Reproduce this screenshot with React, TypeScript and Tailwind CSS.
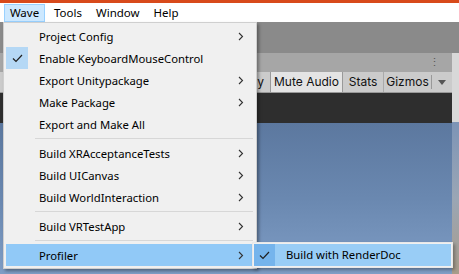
import React from 'react';

type Item =
  | { kind: 'item'; label: string; sub?: boolean; checked?: boolean; active?: boolean }
  | { kind: 'sep' };

const items: Item[] = [
  { kind: 'item', label: 'Project Config', sub: true },
  { kind: 'item', label: 'Enable KeyboardMouseControl', checked: true },
  { kind: 'item', label: 'Export Unitypackage', sub: true },
  { kind: 'item', label: 'Make Package', sub: true },
  { kind: 'item', label: 'Export and Make All' },
  { kind: 'sep' },
  { kind: 'item', label: 'Build XRAcceptanceTests', sub: true },
  { kind: 'item', label: 'Build UICanvas', sub: true },
  { kind: 'item', label: 'Build WorldInteraction', sub: true },
  { kind: 'sep' },
  { kind: 'item', label: 'Build VRTestApp', sub: true },
  { kind: 'sep' },
  { kind: 'item', label: 'Profiler', sub: true, active: true },
];

const Chevron = () => (
  <svg width="6" height="9" viewBox="0 0 6 9" className="text-[#333]">
    <path d="M1 1 L4.5 4.5 L1 8" fill="none" stroke="currentColor" strokeWidth="1.1" />
  </svg>
);

const Check = () => (
  <svg width="11" height="9" viewBox="0 0 11 9" className="text-[#1f1f1f]">
    <path d="M1 4.5 L4 7.5 L10 1" fill="none" stroke="currentColor" strokeWidth="1.2" />
  </svg>
);

const menuFont = { fontFamily: '"Noto Sans", "Liberation Sans", sans-serif' };
const unityFont = { fontFamily: 'Inter, "Liberation Sans", sans-serif' };

export default function App() {
  return (
    <div className="relative w-[459px] h-[274px] overflow-hidden bg-[#6f8cb4]" style={menuFont}>
      {/* title strip + menu bar */}
      <div className="h-[3px] bg-[#d84a1b]" />
      <div className="h-[19px] bg-white flex items-center text-[11.5px] text-black">
        <div className="ml-[4px] h-[18px] w-[41px] flex items-center justify-center bg-[#cce8ff] border border-[#99d1ff]">
          Wave
        </div>
        <div className="ml-[9px]">Tools</div>
        <div className="ml-[14px]">Window</div>
        <div className="ml-[14px]">Help</div>
      </div>

      {/* editor background */}
      <div className="flex h-[252px]">
        <div className="flex-1 flex flex-col">
          <div className="h-[31px] bg-[#8a8a8a]" />
          <div className="h-[19px] bg-[#a6a6a6] flex items-center justify-end pr-[12px] text-[#555] text-[11px]">⋮</div>
          <div className="h-[21px] bg-[#cbcbcb] flex items-stretch text-[12px] text-[#111] border-b border-[#999]" style={unityFont}>
            <div className="w-[271px] flex items-center justify-end pr-[6px] border-r border-[#999]">y</div>
            <div className="w-[72px] bg-[#e4e4e4] flex items-center justify-center border-r border-[#999]">Mute Audio</div>
            <div className="w-[41px] flex items-center justify-center border-r border-[#aaa]">Stats</div>
            <div className="w-[47px] flex items-center justify-center">Gizmos</div>
            <div className="flex-1 flex items-center justify-center border-l border-[#999] my-[3px]">
              <svg width="8" height="5" viewBox="0 0 8 5"><path d="M0 0 H8 L4 5 Z" fill="#555" /></svg>
            </div>
          </div>
          <div className="h-[30px] bg-[#2e2e2e]" />
          <div className="flex-1 bg-gradient-to-b from-[#5c789f] via-[#6a88b0] to-[#7f9dc5]" />
        </div>
        <div className="w-[7px] flex flex-col">
          <div className="h-[31px] bg-[#8a8a8a]" />
          <div className="h-[69px] bg-[#d8d8d8]" />
          <div className="flex-1 bg-gradient-to-b from-[#7d94b6] via-[#9aa6b5] to-[#a99c8a]" />
        </div>
      </div>

      {/* dropdown */}
      <div className="absolute left-[3px] top-[22px] w-[254px] bg-[#f0f0f0] border border-[#cfcfcf] pt-[2px] pb-[2px] shadow-[2px_2px_3px_rgba(0,0,0,0.35)] text-[11.3px] text-black">
        {items.map((it, i) =>
          it.kind === 'sep' ? (
            <div key={i} className="h-[7px] flex items-center pl-[31px] pr-[3px]">
              <div className="h-px w-full bg-[#d7d7d7]" />
            </div>
          ) : (
            <div
              key={i}
              className={`h-[22px] mx-[2px] flex items-center relative ${it.active ? 'bg-[#91c9f7]' : ''}`}
            >
              <div className={`w-[22px] h-[22px] flex items-center justify-center ${it.checked ? 'bg-[#b5d8f5]' : ''}`}>
                {it.checked && <Check />}
              </div>
              <span className="ml-[11px] flex-1 pt-[2px]">{it.label}</span>
              {it.sub && (
                <span className="w-[16px] flex items-center">
                  <Chevron />
                </span>
              )}
            </div>
          )
        )}
      </div>

      {/* submenu */}
      <div className="absolute left-[252px] top-[242px] w-[201px] h-[26px] bg-[#f0f0f0] border border-[#e8e8e8] p-[1px] shadow-[2px_2px_3px_rgba(0,0,0,0.3)] text-[11.3px] text-black">
        <div className="h-full bg-[#99cdf6] flex items-center">
          <div className="w-[21px] h-full bg-[#75b4ec] flex items-center justify-center">
            <Check />
          </div>
          <span className="ml-[11px] pt-[1px]">Build with RenderDoc</span>
        </div>
      </div>
    </div>
  );
}
